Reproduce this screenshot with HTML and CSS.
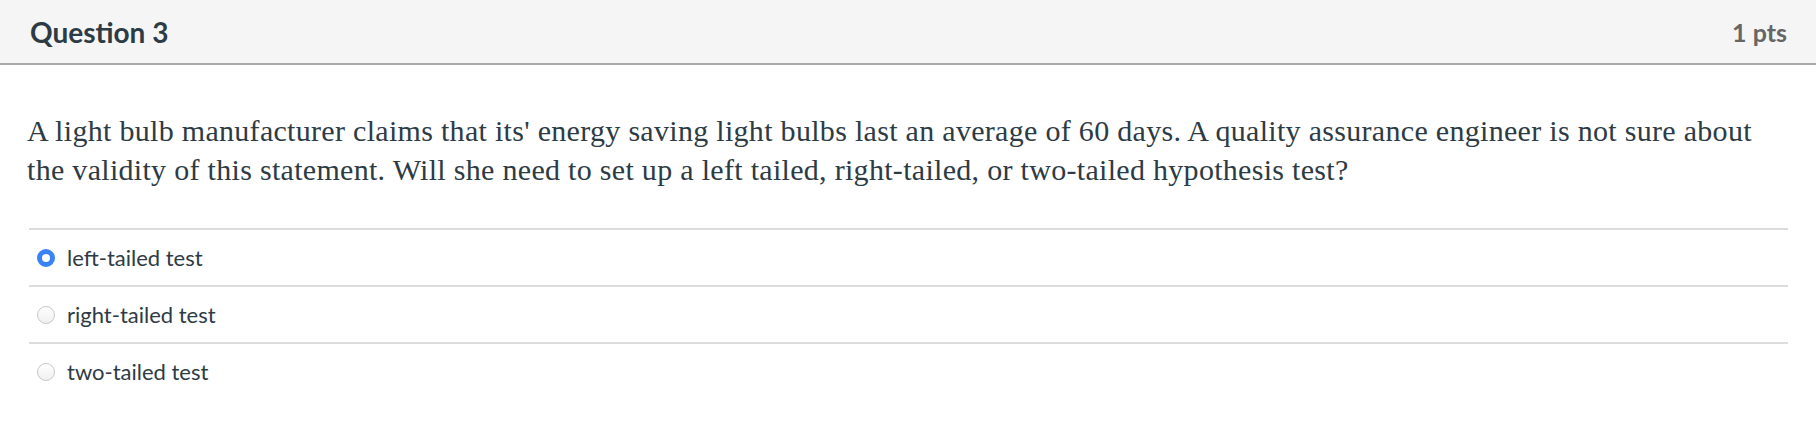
FILE: index.html
```html
<!DOCTYPE html>
<html lang="en">
<head>
    <meta charset="UTF-8">
    <title>Question 3</title>
    <link rel="stylesheet" href="styles.css">
</head>
<body>
    <div class="question">
        <div class="question-header">
            <span class="question-title">Question 3</span>
            <span class="question-points">1 pts</span>
        </div>

        <div class="question-body">
            <p class="question-text">A light bulb manufacturer claims that its' energy saving light bulbs last an average of 60 days. A quality assurance engineer is not sure about the validity of this statement. Will she need to set up a left tailed, right-tailed, or two-tailed hypothesis test?</p>

            <div class="answers">
                <label class="answer">
                    <span class="radio checked"></span>
                    <span class="answer-label">left-tailed test</span>
                </label>
                <label class="answer">
                    <span class="radio"></span>
                    <span class="answer-label">right-tailed test</span>
                </label>
                <label class="answer">
                    <span class="radio"></span>
                    <span class="answer-label">two-tailed test</span>
                </label>
            </div>
        </div>
    </div>
</body>
</html>
```

FILE: styles.css
```css
body {
    margin: 0;
    background: #fff;
    color: #2d3b45;
    font-family: Lato, "Open Sans", sans-serif;
}

.question-header {
    display: flex;
    justify-content: space-between;
    align-items: center;
    height: 63px;
    padding: 0 29px 0 30px;
    background: #f5f5f5;
    border-bottom: 2px solid #aaa;
}

.question-title {
    font-size: 28px;
    font-weight: bold;
    color: #2d3b45;
}

.question-points {
    font-size: 25px;
    font-weight: bold;
    color: #666;
}

.question-body {
    padding: 0 28px 0 27px;
}

.question-text {
    margin: 0;
    padding: 46px 0 39px 0;
    font-family: "Liberation Serif", "Times New Roman", serif;
    font-size: 30px;
    letter-spacing: 0.3px;
    line-height: 39px;
}

.answers {
    margin-left: 2px;
}

.answer {
    display: flex;
    align-items: center;
    height: 55px;
    border-top: 2px solid #dcdcdc;
}

.radio {
    width: 18px;
    height: 18px;
    margin: 0 12px 0 8px;
    border-radius: 50%;
    border: 1px solid #c8c8c8;
    background: linear-gradient(#fff, #f0f0f0);
    box-sizing: border-box;
}

.radio.checked {
    border: 5px solid #3a82f7;
    background: #fff;
}

.answer-label {
    font-size: 22px;
}
```
